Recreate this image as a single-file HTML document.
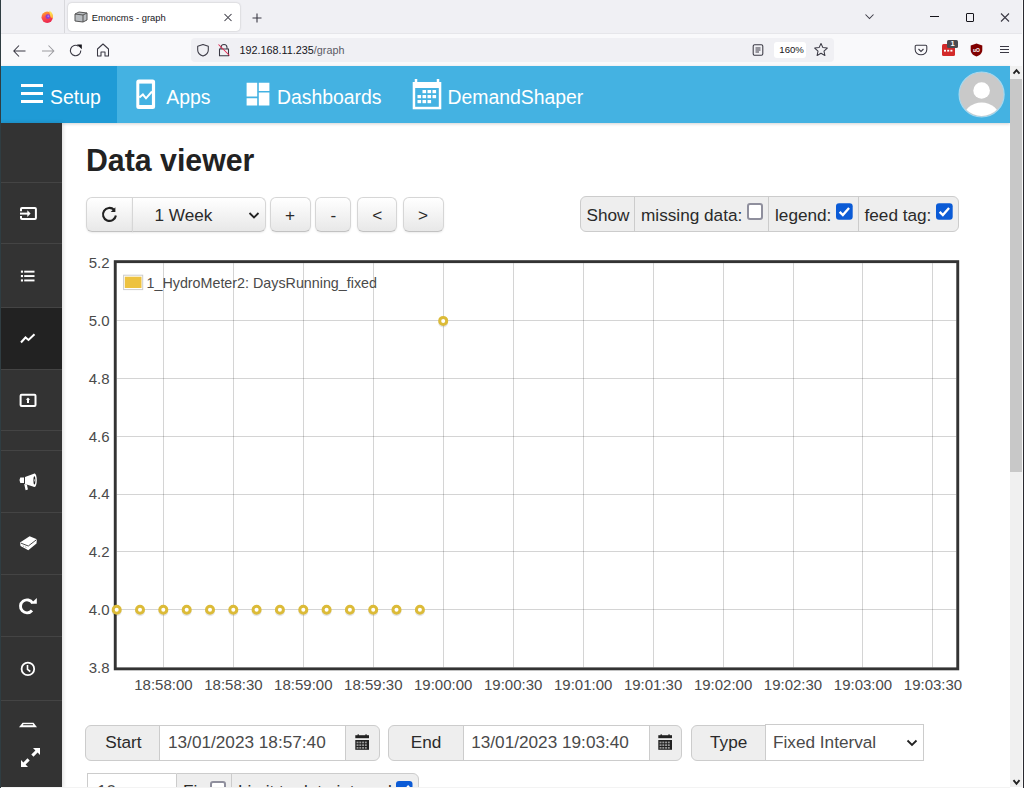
<!DOCTYPE html>
<html><head><meta charset="utf-8">
<style>
*{margin:0;padding:0;box-sizing:border-box}
html,body{width:1024px;height:788px;overflow:hidden;background:#fff;font-family:"Liberation Sans",sans-serif;position:relative}
.a{position:absolute}
#tabbar{left:0;top:0;width:1024px;height:34px;background:#f0f0f4}
#navbar{left:0;top:34px;width:1024px;height:32px;background:#f9f9fb}
#header{left:0;top:66px;width:1010px;height:57px;background:#44b2e2;box-shadow:0 1px 3px rgba(0,0,0,.18)}
#setup{left:0;top:66px;width:117px;height:57px;background:#1f9bd6}
.hl{color:#fff;font-size:19.4px;line-height:1}
#sidebar{left:0;top:123px;width:62px;height:665px;background:#333;box-shadow:1px 0 4px rgba(0,0,0,.15)}
.sep{left:0;width:62px;height:1px;background:#444}
.btn{background:linear-gradient(#fff,#e8e8e8);border:1px solid #d6d6d6;border-bottom-color:#c2c2c2;border-radius:6px;box-shadow:0 1px 2px rgba(0,0,0,.08)}
.t17{font-size:17.2px;color:#2a2a2a;line-height:1}
.addon{background:#eee;border:1px solid #ccc}
svg text{font-family:"Liberation Sans",sans-serif;font-size:15px;fill:#4a4a4a}
</style></head><body>
<!-- browser chrome -->
<div class="a" id="tabbar"></div>
<div class="a" id="navbar"></div>
<div class="a" style="left:0;top:33px;width:1024px;height:1px;background:#e6e6ea"></div>
<div class="a" style="left:0;top:786.5px;width:1010px;height:1.5px;background:#f3f3f3;z-index:5"></div>
<div class="a" style="left:0;top:0;width:1px;height:788px;background:#2f3d42;z-index:9"></div>
<div class="a" style="left:1022px;top:0;width:1px;height:788px;background:#fafafa;z-index:9"></div><div class="a" style="left:1023px;top:0;width:1px;height:788px;background:#2a2a30;z-index:9"></div>


<!-- tabs -->
<div class="a" style="left:64px;top:0;width:1px;height:33px;background:#d8d8dc"></div>
<div class="a" style="left:68px;top:3px;width:172px;height:28px;background:#fff;border-radius:4px;box-shadow:0 0 2px rgba(0,0,0,.25)"></div>
<svg class="a" style="left:38px;top:8px" width="18" height="18" viewBox="0 0 18 18">
 <defs><linearGradient id="ff" x1="0.2" y1="0.1" x2="0.5" y2="1"><stop offset="0" stop-color="#ff9a2e"/><stop offset="0.45" stop-color="#ff4f4a"/><stop offset="1" stop-color="#e8254f"/></linearGradient><linearGradient id="fy" x1="0" y1="0" x2="0" y2="1"><stop offset="0" stop-color="#fff25a"/><stop offset="1" stop-color="#ffb23a"/></linearGradient></defs>
 <circle cx="9.2" cy="9.3" r="5.7" fill="url(#ff)"/><path d="M11 2.5 C14.5 4 15.5 7.5 14.7 10.5 L12.5 9 Z" fill="url(#fy)"/><circle cx="9.8" cy="8.6" r="2.3" fill="#8b3fcf"/><circle cx="10.3" cy="8.3" r="1" fill="#b07ae8"/>
</svg>
<svg class="a" style="left:74px;top:11px" width="14" height="12" viewBox="0 0 14 12">
 <path d="M1 3 L5 1 L13 2 L13 9 L9 11 L1 10 Z" fill="#b8bcc0" stroke="#555" stroke-width="1"/><path d="M1 3 L9 4 L13 2 M9 4 V11" stroke="#555" stroke-width="1" fill="none"/>
</svg>
<div class="a" style="left:91.7px;top:12.6px;font-size:9.4px;color:#15141a;line-height:1">Emoncms - graph</div>
<svg class="a" style="left:223px;top:13px" width="10" height="9" viewBox="0 0 10 9"><path d="M1.5 1 L8.5 8 M8.5 1 L1.5 8" stroke="#3a3944" stroke-width="1.05"/></svg>
<svg class="a" style="left:251px;top:12px" width="12" height="12" viewBox="0 0 12 12"><path d="M6 1.5 V10.5 M1.5 6 H10.5" stroke="#3a3944" stroke-width="1.1"/></svg>
<svg class="a" style="left:862px;top:12px" width="14" height="10" viewBox="0 0 14 10"><path d="M3.5 2.5 L7.5 6.5 L11.5 2.5" stroke="#3a3944" stroke-width="1.05" fill="none"/></svg>
<div class="a" style="left:929.5px;top:16px;width:9px;height:1.3px;background:#15141a"></div>
<div class="a" style="left:965.5px;top:13px;width:8.5px;height:8.5px;border:1.3px solid #15141a;border-radius:1px"></div>
<svg class="a" style="left:1000px;top:13px" width="10" height="9" viewBox="0 0 10 9"><path d="M1 0.5 L9 8.5 M9 0.5 L1 8.5" stroke="#3a3944" stroke-width="1.1"/></svg>
<!-- nav -->
<svg class="a" style="left:12px;top:44px" width="16" height="14" viewBox="0 0 16 14"><path d="M2 7 H13.5 M7 1.5 L1.8 7 L7 12.5" stroke="#3a3944" stroke-width="1.05" fill="none"/></svg>
<svg class="a" style="left:40px;top:44px" width="16" height="14" viewBox="0 0 16 14"><path d="M2 7 H13.5 M8.5 1.5 L13.8 7 L8.5 12.5" stroke="#9b9ba0" stroke-width="1.05" fill="none"/></svg>
<svg class="a" style="left:68px;top:43px" width="16" height="16" viewBox="0 0 16 16"><path d="M12.8 7.5 A5.2 5.2 0 1 1 10.5 3.2" stroke="#3a3944" stroke-width="1.1" fill="none"/><path d="M9 1.5 L13.8 1.5 L13.8 6.3 Z" fill="#15141a"/></svg>
<svg class="a" style="left:95px;top:42px" width="16" height="16" viewBox="0 0 16 16"><path d="M2.5 7 L8 2 L13.5 7 V14 H10 V10 H6 V14 H2.5 Z" stroke="#3a3944" stroke-width="1.05" fill="none" stroke-linejoin="round"/></svg>
<div class="a" style="left:190.5px;top:37.5px;width:643px;height:24px;background:#f0f0f4;border-radius:4px"></div>
<svg class="a" style="left:196px;top:43px" width="14" height="14" viewBox="0 0 14 14"><path d="M7 1.5 L12.3 3.2 V7 C12.3 10 10 12 7 13 C4 12 1.7 10 1.7 7 V3.2 Z" stroke="#3a3944" stroke-width="1.05" fill="none" stroke-linejoin="round"/></svg>
<svg class="a" style="left:217px;top:43px" width="14" height="14" viewBox="0 0 14 14"><path d="M4 6 V4.5 A3 3 0 0 1 10 4.5 V6 M2.5 6 H11.5 V12.8 H2.5 Z" stroke="#3a3944" stroke-width="1.05" fill="none"/><path d="M1.5 1.5 L12.5 12.5" stroke="#e22850" stroke-width="1.05"/></svg>
<div class="a" style="left:239.6px;top:45.3px;font-size:10.8px;color:#15141a;line-height:1;white-space:nowrap">192.168.11.235<span style="color:#5b5b66">/graph</span></div>
<svg class="a" style="left:752px;top:44px" width="12" height="12" viewBox="0 0 12 12"><rect x="1.2" y="0.8" width="9.6" height="10.4" rx="1.5" stroke="#3a3944" stroke-width="1.05" fill="none"/><path d="M3.5 4 H8.5 M3.5 6 H8.5 M3.5 8 H7" stroke="#3a3944" stroke-width="1"/></svg>
<div class="a" style="left:773.5px;top:42px;width:32.5px;height:16px;background:#fff;border-radius:3px"></div>
<div class="a" style="left:779.3px;top:45.2px;font-size:9.6px;color:#15141a;line-height:1">160%</div>
<svg class="a" style="left:813px;top:42px" width="16" height="16" viewBox="0 0 16 16"><path d="M8 1.5 L9.9 5.6 L14.3 6.1 L11 9.1 L11.9 13.5 L8 11.3 L4.1 13.5 L5 9.1 L1.7 6.1 L6.1 5.6 Z" stroke="#3a3944" stroke-width="1.05" fill="none" stroke-linejoin="round"/></svg>
<svg class="a" style="left:914px;top:44px" width="14" height="13" viewBox="0 0 14 13"><path d="M2.3 1.3 H11.7 Q12.8 1.3 12.8 2.4 V5.8 A5.8 5 0 0 1 1.2 5.8 V2.4 Q1.2 1.3 2.3 1.3 Z" stroke="#3a3944" stroke-width="1.05" fill="none"/><path d="M4.5 5 L7 7.4 L9.5 5" stroke="#3a3944" stroke-width="1.1" fill="none"/></svg>
<div class="a" style="left:942px;top:43.5px;width:13px;height:12.5px;background:#d32a2a;border-radius:1.5px"></div>
<svg class="a" style="left:942px;top:43px" width="14" height="14" viewBox="0 0 14 14"><g fill="#fff"><rect x="2" y="6.8" width="2" height="1.8"/><rect x="5.2" y="6.8" width="2" height="1.8"/><rect x="8.4" y="6.8" width="2" height="1.8"/></g></svg>
<div class="a" style="left:947px;top:40px;width:11px;height:7.5px;background:#4a4a4f;border-radius:1.5px;color:#fff;font-size:7.5px;font-weight:bold;text-align:center;line-height:7.5px">1</div>
<svg class="a" style="left:970px;top:43px" width="13" height="14" viewBox="0 0 13 14"><path d="M6.5 0.5 L12.3 2.5 V7 C12.3 10.5 9.5 12.5 6.5 13.5 C3.5 12.5 0.7 10.5 0.7 7 V2.5 Z" fill="#800000"/><text x="6.5" y="8.5" text-anchor="middle" style="font-size:5px;fill:#fff;font-weight:bold">uO</text></svg>
<svg class="a" style="left:999px;top:44px" width="11" height="11" viewBox="0 0 11 11"><path d="M1 2.5 H10 M1 5.5 H10 M1 8.5 H10" stroke="#3a3944" stroke-width="1.1"/></svg>

<!-- blue header -->
<div class="a" id="header"></div>
<div class="a" id="setup"></div>
<div class="a hl" style="left:50.1px;top:87.8px">Setup</div>
<div class="a hl" style="left:166.3px;top:87.8px">Apps</div>
<div class="a hl" style="left:277px;top:87.8px">Dashboards</div>
<div class="a hl" style="left:447.5px;top:87.8px">DemandShaper</div>


<div class="a" style="left:21px;top:84px;width:22px;height:3px;background:#fff"></div>
<div class="a" style="left:21px;top:92px;width:22px;height:3px;background:#fff"></div>
<div class="a" style="left:21px;top:100px;width:22px;height:3px;background:#fff"></div>
<svg class="a" style="left:136px;top:79px" width="20" height="31" viewBox="0 0 20 31"><rect x="0.3" y="0.6" width="18.8" height="29.4" rx="2.5" fill="#fff"/><rect x="3.3" y="4.6" width="12.6" height="21.4" fill="#44b2e2"/><path d="M3.3 18.6 L6.9 15.5 L10 19.3 L16 12.5" stroke="#fff" stroke-width="2" fill="none"/></svg>
<svg class="a" style="left:246px;top:82px" width="24" height="24" viewBox="0 0 24 24"><path d="M0.6 0.8 H11.2 V14.6 H0.6 Z M12.8 0.8 H23.4 V9 H12.8 Z M0.6 16.2 H11.2 V23.4 H0.6 Z M12.8 10.6 H23.4 V23.4 H12.8 Z" fill="#fff"/></svg>
<svg class="a" style="left:412px;top:78px" width="30" height="32" viewBox="0 0 30 32"><path d="M0.7 4 H29.3 V31.3 H0.7 Z" fill="#fff"/><rect x="3.2" y="10" width="23.6" height="18.8" fill="#44b2e2"/><path d="M4 1 V6 M26 1 V6" stroke="#fff" stroke-width="2.5"/>
<g fill="#fff"><rect x="10.5" y="12" width="3.6" height="3.2"/><rect x="15.5" y="12" width="3.6" height="3.2"/><rect x="20.5" y="12" width="3.6" height="3.2"/>
<rect x="5.5" y="17" width="3.6" height="3.2"/><rect x="10.5" y="17" width="3.6" height="3.2"/><rect x="15.5" y="17" width="3.6" height="3.2"/><rect x="20.5" y="17" width="3.6" height="3.2"/>
<rect x="5.5" y="22" width="3.6" height="3.2"/><rect x="10.5" y="22" width="3.6" height="3.2"/><rect x="15.5" y="22" width="3.6" height="3.2"/></g></svg>
<svg class="a" style="left:957px;top:70px" width="50" height="50" viewBox="0 0 50 50"><defs><clipPath id="av"><circle cx="24.6" cy="24.5" r="21.5"/></clipPath></defs><circle cx="24.6" cy="24.5" r="22.5" fill="#c9c9c9" stroke="#a8d8ee" stroke-width="1.2"/><g clip-path="url(#av)"><circle cx="24.6" cy="20.5" r="8.3" fill="#fff"/><ellipse cx="24.6" cy="48" rx="18" ry="15.5" fill="#fff"/></g></svg>

<!-- sidebar -->
<div class="a" id="sidebar"></div>


<div class="a sep" style="top:182px"></div>
<div class="a sep" style="top:243px"></div>
<div class="a sep" style="top:307px"></div>
<div class="a" style="left:1px;top:308px;width:61px;height:61px;background:#222"></div>
<div class="a sep" style="top:369px"></div>
<div class="a sep" style="top:430px"></div>
<div class="a sep" style="top:450px"></div>
<div class="a sep" style="top:512px"></div>
<div class="a sep" style="top:574px"></div>
<div class="a sep" style="top:636px"></div>
<div class="a sep" style="top:700px"></div>
<svg class="a" style="left:19px;top:206px" width="18" height="16" viewBox="0 0 18 16"><path d="M2 5.2 V3 Q2 2 3 2 H15.9 Q16.9 2 16.9 3 V12 Q16.9 13 15.9 13 H3 Q2 13 2 12 V10" stroke="#fff" stroke-width="2" fill="none"/><path d="M1 7.6 H9.5" stroke="#fff" stroke-width="2"/><path d="M8.3 4.3 L11.6 7.6 L8.3 10.9 Z" fill="#fff"/></svg>
<svg class="a" style="left:20px;top:270px" width="16" height="13" viewBox="0 0 16 13"><g fill="#fff"><rect x="0.9" y="0.6" width="2.1" height="2.1"/><rect x="0.9" y="5" width="2.1" height="2.1"/><rect x="0.9" y="9.4" width="2.1" height="2.1"/><rect x="4.2" y="0.7" width="10.3" height="1.9"/><rect x="4.2" y="5.1" width="10.3" height="1.9"/><rect x="4.2" y="9.5" width="10.3" height="1.9"/></g></svg>
<svg class="a" style="left:20px;top:333px" width="16" height="11" viewBox="0 0 16 11"><path d="M1 9.5 L5.5 4.5 L8.5 7 L14.5 1.2" stroke="#fff" stroke-width="2" fill="none"/></svg>
<svg class="a" style="left:19px;top:393px" width="18" height="15" viewBox="0 0 18 15"><rect x="1.6" y="1.7" width="14.9" height="11.2" rx="1" stroke="#fff" stroke-width="2" fill="none"/><path d="M9 4.4 L11.2 6.8 H10 V9.9 H8 V6.8 H6.8 Z" fill="#fff"/></svg>
<svg class="a" style="left:14px;top:466px" width="30" height="30" viewBox="0 0 30 30"><path d="M10 11.4 H6.3 Q4.5 14.2 6.3 17.1 H10 Z" fill="#fff"/><path d="M11 11 L20.5 7.6 L20.5 21.1 L11 17.9 Z" fill="#fff"/><ellipse cx="20.6" cy="14.35" rx="2.2" ry="6.75" fill="#fff"/><ellipse cx="20.4" cy="14.35" rx="0.95" ry="4.2" fill="#222"/><ellipse cx="20.6" cy="14.35" rx="0.5" ry="1.4" fill="#aaa"/><path d="M10.2 18 L11.6 24.2 L13.9 23.4 L12.9 18.4 Z" fill="#fff"/></svg>
<svg class="a" style="left:19px;top:535px" width="20" height="18" viewBox="0 0 20 18"><path d="M1 7.4 L10.6 1.2 L17.9 4.2 L17.5 8.5 L9.3 15.3 L1.5 11 Z" fill="#fff"/><path d="M1.6 8 L9.3 11 L17.6 4.6" stroke="#333" stroke-width="0.9" fill="none"/><path d="M4 10.5 L5 12 M6.5 11.5 L7.3 13" stroke="#888" stroke-width="0.7"/></svg>
<svg class="a" style="left:18px;top:597px" width="21" height="20" viewBox="0 0 21 20"><path d="M14 13.5 A6.5 6.5 0 1 1 14.6 6.05" stroke="#fff" stroke-width="2.9" fill="none"/><path d="M18.8 1.1 L18.8 6.8 L12.7 6.8 Z" fill="#fff"/></svg>
<svg class="a" style="left:20px;top:661px" width="16" height="16" viewBox="0 0 16 16"><circle cx="7.9" cy="7.9" r="6.3" stroke="#fff" stroke-width="1.8" fill="none"/><path d="M7.5 4 V8.3 L10.3 10.5" stroke="#fff" stroke-width="1.6" fill="none"/></svg>
<svg class="a" style="left:18px;top:721px" width="21" height="9" viewBox="0 0 21 9"><path d="M4.6 1.7 H15.5 L19 6.2 H1 Z" fill="#fff"/><path d="M5.4 2.9 H14.8 L15.2 4.3 H5 Z" fill="#555"/></svg>
<svg class="a" style="left:20px;top:747px" width="21" height="21" viewBox="0 0 21 21"><path d="M13 1 H20 V8 L17.6 5.6 L13.5 9.7 L11.3 7.5 L15.4 3.4 Z M8 20 H1 V13 L3.4 15.4 L7.5 11.3 L9.7 13.5 L5.6 17.6 Z" fill="#fff"/></svg>

<!-- content -->
<div class="a" style="left:86px;top:145px;font-size:31px;font-weight:bold;color:#222;line-height:1;transform:scaleX(0.977);transform-origin:0 0;white-space:nowrap">Data viewer</div>


<!-- controls row -->
<div class="a btn" style="left:85.5px;top:196.5px;width:47px;height:35.5px;border-radius:6px 0 0 6px"></div>
<svg class="a" style="left:100px;top:206px" width="18" height="18" viewBox="0 0 18 18"><path d="M15.9 9.5 A6.5 6.5 0 1 1 14.1 3.8" stroke="#222" stroke-width="2.1" fill="none"/><path d="M15.4 1.2 L15.4 5.9 L10.7 5.9 Z" fill="#222"/></svg>
<div class="a btn" style="left:131.5px;top:196.5px;width:134.3px;height:35.5px;border-radius:0 6px 6px 0"></div>
<div class="a t17" style="left:154.5px;top:207.4px">1 Week</div>
<svg class="a" style="left:248px;top:210.8px" width="12" height="9" viewBox="0 0 12 9"><path d="M1.5 2 L6 6.5 L10.5 2" stroke="#222" stroke-width="1.8" fill="none"/></svg>
<div class="a btn" style="left:269.5px;top:196.5px;width:41px;height:35.5px"></div>
<div class="a t17" style="left:269.5px;top:206.6px;width:41px;text-align:center">+</div>
<div class="a btn" style="left:315.3px;top:196.5px;width:36.2px;height:35.5px"></div>
<div class="a t17" style="left:315.3px;top:206.6px;width:36.2px;text-align:center">-</div>
<div class="a btn" style="left:357px;top:196.5px;width:40.3px;height:35.5px"></div>
<div class="a t17" style="left:357px;top:206.6px;width:40.3px;text-align:center">&lt;</div>
<div class="a btn" style="left:402.5px;top:196.5px;width:41.2px;height:35.5px"></div>
<div class="a t17" style="left:402.5px;top:206.6px;width:41.2px;text-align:center">&gt;</div>

<div class="a addon" style="left:579.8px;top:196.3px;width:379.5px;height:35.5px;border-radius:6px"></div>
<div class="a" style="left:634px;top:197px;width:1px;height:34px;background:#ccc"></div>
<div class="a" style="left:768px;top:197px;width:1px;height:34px;background:#ccc"></div>
<div class="a" style="left:858px;top:197px;width:1px;height:34px;background:#ccc"></div>
<div class="a t17" style="left:586.5px;top:206.5px">Show</div>
<div class="a t17" style="left:641px;top:206.5px">missing data:</div>
<div class="a" style="left:747.2px;top:203.2px;width:16px;height:16.4px;border:2px solid #8f8f9d;border-radius:3px;background:#fff"></div>
<div class="a t17" style="left:775px;top:206.5px">legend:</div>
<svg class="a" style="left:836.3px;top:203px" width="16.7" height="17" viewBox="0 0 16.5 16.5"><rect width="16.5" height="16.5" rx="3" fill="#0b5bd6"/><path d="M3.6 8.6 L6.8 11.8 L12.9 4.8" stroke="#fff" stroke-width="2.3" fill="none"/></svg>
<div class="a t17" style="left:864.5px;top:206.5px">feed tag:</div>
<svg class="a" style="left:936px;top:203px" width="16.7" height="17" viewBox="0 0 16.5 16.5"><rect width="16.5" height="16.5" rx="3" fill="#0b5bd6"/><path d="M3.6 8.6 L6.8 11.8 L12.9 4.8" stroke="#fff" stroke-width="2.3" fill="none"/></svg>

<!-- bottom rows -->
<div class="a addon" style="left:85.4px;top:724.8px;width:294.3px;height:36px;border-radius:6px"></div>
<div class="a" style="left:159.3px;top:724.8px;width:187.1px;height:36px;background:#fff;border:1px solid #ccc"></div>
<div class="a t17" style="left:105.2px;top:733.9px">Start</div>
<div class="a t17" style="left:168px;top:733.9px;color:#4a4a4a">13/01/2023 18:57:40</div>
<div class="a addon" style="left:388.1px;top:724.8px;width:293.8px;height:36px;border-radius:6px"></div>
<div class="a" style="left:462.5px;top:724.8px;width:187.2px;height:36px;background:#fff;border:1px solid #ccc"></div>
<div class="a t17" style="left:410.8px;top:733.9px">End</div>
<div class="a t17" style="left:471.2px;top:733.9px;color:#4a4a4a">13/01/2023 19:03:40</div>
<svg class="a" style="left:355.3px;top:734.3px" width="14" height="16" viewBox="0 0 14 16"><rect x="0.3" y="1.2" width="13.7" height="3" fill="#222"/><rect x="2.5" y="0.4" width="1.5" height="1.5" fill="#222"/><rect x="10.3" y="0.4" width="1.5" height="1.5" fill="#222"/><rect x="0.3" y="6" width="13.7" height="9.8" fill="#222"/><g fill="#999"><rect x="1.60" y="7.60" width="1.9" height="1.7"/><rect x="4.35" y="7.60" width="1.9" height="1.7"/><rect x="7.10" y="7.60" width="1.9" height="1.7"/><rect x="9.85" y="7.60" width="1.9" height="1.7"/><rect x="1.60" y="10.30" width="1.9" height="1.7"/><rect x="4.35" y="10.30" width="1.9" height="1.7"/><rect x="7.10" y="10.30" width="1.9" height="1.7"/><rect x="9.85" y="10.30" width="1.9" height="1.7"/><rect x="1.60" y="13.00" width="1.9" height="1.7"/><rect x="4.35" y="13.00" width="1.9" height="1.7"/><rect x="7.10" y="13.00" width="1.9" height="1.7"/><rect x="9.85" y="13.00" width="1.9" height="1.7"/></g></svg><svg class="a" style="left:657.8px;top:734.3px" width="14" height="16" viewBox="0 0 14 16"><rect x="0.3" y="1.2" width="13.7" height="3" fill="#222"/><rect x="2.5" y="0.4" width="1.5" height="1.5" fill="#222"/><rect x="10.3" y="0.4" width="1.5" height="1.5" fill="#222"/><rect x="0.3" y="6" width="13.7" height="9.8" fill="#222"/><g fill="#999"><rect x="1.60" y="7.60" width="1.9" height="1.7"/><rect x="4.35" y="7.60" width="1.9" height="1.7"/><rect x="7.10" y="7.60" width="1.9" height="1.7"/><rect x="9.85" y="7.60" width="1.9" height="1.7"/><rect x="1.60" y="10.30" width="1.9" height="1.7"/><rect x="4.35" y="10.30" width="1.9" height="1.7"/><rect x="7.10" y="10.30" width="1.9" height="1.7"/><rect x="9.85" y="10.30" width="1.9" height="1.7"/><rect x="1.60" y="13.00" width="1.9" height="1.7"/><rect x="4.35" y="13.00" width="1.9" height="1.7"/><rect x="7.10" y="13.00" width="1.9" height="1.7"/><rect x="9.85" y="13.00" width="1.9" height="1.7"/></g></svg>
<div class="a addon" style="left:691.4px;top:725px;width:80px;height:35.7px;border-radius:6px 0 0 6px"></div>
<div class="a" style="left:765px;top:724.2px;width:158.8px;height:37.3px;background:#fff;border:1px solid #ccc"></div>
<div class="a t17" style="left:710px;top:733.9px">Type</div>
<div class="a t17" style="left:773px;top:733.9px;color:#4a4a4a">Fixed Interval</div>
<svg class="a" style="left:905px;top:738px" width="14" height="10" viewBox="0 0 14 10"><path d="M2.5 2.5 L7 7 L11.5 2.5" stroke="#222" stroke-width="1.8" fill="none"/></svg>
<div class="a" style="left:87.4px;top:773.4px;width:88.5px;height:20px;background:#fff;border:1px solid #ccc;border-right:none"></div>
<div class="a addon" style="left:175.8px;top:773.4px;width:243px;height:20px;border-radius:0 6px 0 0"></div>
<div class="a" style="left:230.7px;top:774px;width:1px;height:20px;background:#ccc"></div>
<div class="a t17" style="left:97px;top:782.5px;color:#4a4a4a">10</div>
<div class="a t17" style="left:183px;top:782.5px">Fi</div>
<div class="a" style="left:210px;top:780.8px;width:16px;height:16px;border:2px solid #8f8f9d;border-radius:3px;background:#fff"></div>
<div class="a t17" style="left:238px;top:782.5px">Limit to data interval</div>
<svg class="a" style="left:396.2px;top:780.5px" width="16.5" height="16.5" viewBox="0 0 16.5 16.5"><rect width="16.5" height="16.5" rx="3" fill="#0b5bd6"/><path d="M3.6 8.6 L6.8 11.8 L12.9 4.8" stroke="#fff" stroke-width="2.3" fill="none"/></svg>

<!--CHART--><svg class="a" style="left:0;top:0" width="1024" height="788" viewBox="0 0 1024 788">
<g stroke="rgba(0,0,0,0.17)" stroke-width="1" fill="none"><path d="M163.5 263.1V667.4"/><path d="M233.5 263.1V667.4"/><path d="M303.5 263.1V667.4"/><path d="M373.5 263.1V667.4"/><path d="M443.5 263.1V667.4"/><path d="M513.5 263.1V667.4"/><path d="M583.5 263.1V667.4"/><path d="M653.5 263.1V667.4"/><path d="M723.5 263.1V667.4"/><path d="M793.5 263.1V667.4"/><path d="M862.5 263.1V667.4"/><path d="M932.5 263.1V667.4"/><path d="M116.7 320.5H956.3"/><path d="M116.7 378.5H956.3"/><path d="M116.7 436.5H956.3"/><path d="M116.7 494.5H956.3"/><path d="M116.7 551.5H956.3"/><path d="M116.7 609.5H956.3"/></g>
<rect x="115.25" y="261.65" width="842.50" height="407.20" fill="none" stroke="#333" stroke-width="2.9"/>
<text x="109.5" y="268.2" text-anchor="end">5.2</text>
<text x="109.5" y="326.0" text-anchor="end">5.0</text>
<text x="109.5" y="383.7" text-anchor="end">4.8</text>
<text x="109.5" y="441.5" text-anchor="end">4.6</text>
<text x="109.5" y="499.2" text-anchor="end">4.4</text>
<text x="109.5" y="557.0" text-anchor="end">4.2</text>
<text x="109.5" y="614.8" text-anchor="end">4.0</text>
<text x="109.5" y="672.5" text-anchor="end">3.8</text>
<text x="163.4" y="690.3" text-anchor="middle">18:58:00</text>
<text x="233.4" y="690.3" text-anchor="middle">18:58:30</text>
<text x="303.3" y="690.3" text-anchor="middle">18:59:00</text>
<text x="373.3" y="690.3" text-anchor="middle">18:59:30</text>
<text x="443.2" y="690.3" text-anchor="middle">19:00:00</text>
<text x="513.2" y="690.3" text-anchor="middle">19:00:30</text>
<text x="583.2" y="690.3" text-anchor="middle">19:01:00</text>
<text x="653.1" y="690.3" text-anchor="middle">19:01:30</text>
<text x="723.1" y="690.3" text-anchor="middle">19:02:00</text>
<text x="793.0" y="690.3" text-anchor="middle">19:02:30</text>
<text x="863.0" y="690.3" text-anchor="middle">19:03:00</text>
<text x="933.0" y="690.3" text-anchor="middle">19:03:30</text>
<g fill="none" stroke="rgba(0,0,0,0.1)" stroke-width="3"><circle cx="116.7" cy="611.3" r="3.5"/><circle cx="140.0" cy="611.3" r="3.5"/><circle cx="163.3" cy="611.3" r="3.5"/><circle cx="186.7" cy="611.3" r="3.5"/><circle cx="210.0" cy="611.3" r="3.5"/><circle cx="233.3" cy="611.3" r="3.5"/><circle cx="256.6" cy="611.3" r="3.5"/><circle cx="279.9" cy="611.3" r="3.5"/><circle cx="303.3" cy="611.3" r="3.5"/><circle cx="326.6" cy="611.3" r="3.5"/><circle cx="349.9" cy="611.3" r="3.5"/><circle cx="373.2" cy="611.3" r="3.5"/><circle cx="396.5" cy="611.3" r="3.5"/><circle cx="419.9" cy="611.3" r="3.5"/><circle cx="443.2" cy="322.5" r="3.5"/></g>
<g fill="#fff" stroke="#dcbb38" stroke-width="3"><circle cx="116.7" cy="609.7" r="3.5"/><circle cx="140.0" cy="609.7" r="3.5"/><circle cx="163.3" cy="609.7" r="3.5"/><circle cx="186.7" cy="609.7" r="3.5"/><circle cx="210.0" cy="609.7" r="3.5"/><circle cx="233.3" cy="609.7" r="3.5"/><circle cx="256.6" cy="609.7" r="3.5"/><circle cx="279.9" cy="609.7" r="3.5"/><circle cx="303.3" cy="609.7" r="3.5"/><circle cx="326.6" cy="609.7" r="3.5"/><circle cx="349.9" cy="609.7" r="3.5"/><circle cx="373.2" cy="609.7" r="3.5"/><circle cx="396.5" cy="609.7" r="3.5"/><circle cx="419.9" cy="609.7" r="3.5"/><circle cx="443.2" cy="320.9" r="3.5"/></g>
<rect x="123.6" y="275.2" width="19.1" height="14.4" fill="#fff" stroke="#ccc" stroke-width="1"/>
<rect x="124.8" y="276.7" width="16.7" height="11.3" fill="#edc240"/>
<text x="146.5" y="287.5" style="font-size:14.3px">1_HydroMeter2: DaysRunning_fixed</text>
</svg><!--/CHART-->
<!-- scrollbar -->
<div class="a" style="left:1010px;top:66px;width:12px;height:720.5px;background:#f0f0f0"></div>
<div class="a" style="left:1010px;top:79px;width:12px;height:393px;background:#c8c8c8"></div>
<svg class="a" style="left:1010px;top:66px" width="12" height="13" viewBox="0 0 12 13"><path d="M3.5 7.6 L6.5 4.2 L9.5 7.6" stroke="#222" stroke-width="1.9" fill="none"/></svg>
<svg class="a" style="left:1010px;top:775px" width="12" height="12" viewBox="0 0 12 12"><path d="M3.5 5.2 L6.5 8.8 L9.5 5.2" stroke="#222" stroke-width="1.9" fill="none"/></svg>
</body></html>
